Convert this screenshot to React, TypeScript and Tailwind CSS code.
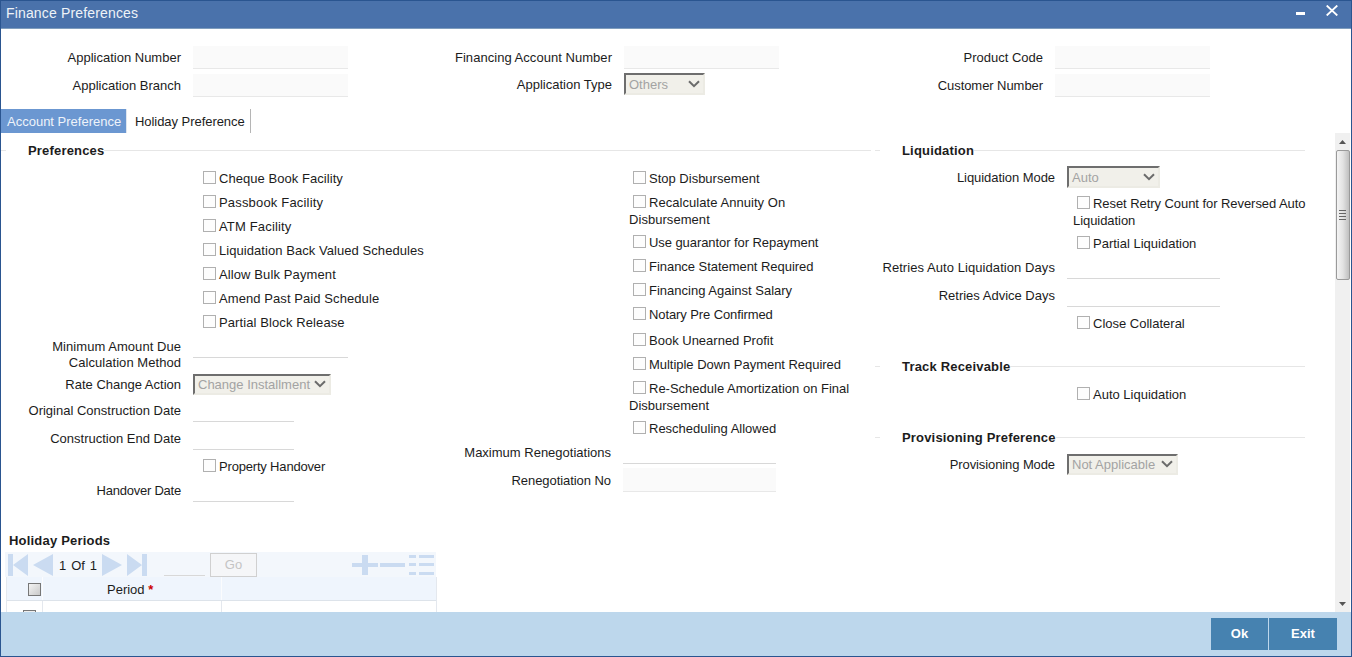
import React from 'react';

const labelCls = 'text-right text-[13px] leading-4 shrink-0 pt-[2px]';
const topLabelCls = 'text-right text-[13px] leading-4 shrink-0';

const CheckBox = () => (
  <span className="inline-block w-[13px] h-[13px] border border-[#b0b0b0] bg-[#fdfdfd] shrink-0 mb-[2px]" />
);

const CheckRow = ({ label, className }: { label: string; className: string }) => (
  <div className={`h-6 flex items-center gap-[3px] text-[13px] ${className}`}>
    <CheckBox />
    <span className="whitespace-nowrap pt-[2px]">{label}</span>
  </div>
);

// checkbox whose label wraps back under the box
const WrapCheck = ({ label, className }: { label: string; className: string }) => (
  <div className={`text-[13px] leading-[17px] ${className}`}>
    <span className="inline-block w-[13px] h-[13px] border border-[#b0b0b0] bg-[#fdfdfd] ml-1 mr-[3px] align-[-1px]" />
    {label}
  </div>
);

const Heading = ({ title, rowClass }: { title: string; rowClass: string }) => (
  <div className={`flex items-center ${rowClass}`}>
    <div className="w-[5px] h-px bg-[#e6e6e6]" />
    <span className="ml-[22px] text-[13px] font-bold whitespace-nowrap tracking-[0.18px] pt-[2px]">{title}</span>
    <div className="flex-1 h-px bg-[#e6e6e6]" />
  </div>
);

const Chevron = () => (
  <svg width="12" height="8" viewBox="0 0 12 8" className="shrink-0">
    <path d="M1 1.2 L6 6.2 L11 1.2" fill="none" stroke="#6b6b6b" strokeWidth="2" />
  </svg>
);

const FakeSelect = ({ value, className }: { value: string; className: string }) => (
  <div
    className={`flex items-center justify-between pl-[3px] pr-[3px] bg-[#f1f0ea] border-2 border-t-[#6e6e6e] border-l-[#6e6e6e] border-r-[#ecebe4] border-b-[#ecebe4] text-[13px] text-[#a3a3a3] ${className}`}
  >
    <span className="whitespace-nowrap pt-[2px]">{value}</span>
    <Chevron />
  </div>
);

const TopRow = ({ label, labelW, fieldW }: { label: string; labelW: string; fieldW: string }) => (
  <div className="h-[23px] flex items-center">
    <span className={`${topLabelCls} ${labelW}`}>{label}</span>
    <div className={`ml-3 h-[23px] bg-[#fafafa] border-b border-[#e8e8e8] ${fieldW}`} />
  </div>
);

const LineRow = ({ label, labelW, fieldW }: { label: string; labelW: string; fieldW: string }) => (
  <div className="h-6 flex items-center">
    <span className={`${labelCls} ${labelW}`}>{label}</span>
    <div className={`ml-3 h-6 border-b border-[#d8d8d8] ${fieldW}`} />
  </div>
);

const Triangle = ({ d }: { d: string }) => (
  <svg width="20" height="22" viewBox="0 0 20 22" className="shrink-0">
    <path d={d} fill="#cadbf1" />
  </svg>
);

const Toolbar = () => (
  <div className="ml-[4px] w-[431px] h-[25px] bg-[#f3f7fc] flex items-center pl-[3px]">
    <Triangle d="M0 0 H5 V22 H0 Z M20 0 V22 L5 11 Z" />
    <span className="w-[5px]" />
    <Triangle d="M20 0 V22 L0 11 Z" />
    <span className="ml-[5px] w-[44px] flex justify-between text-[13px] pl-px pr-[5px] pt-[2px]">
      <span>1</span>
      <span>Of</span>
      <span>1</span>
    </span>
    <Triangle d="M0 0 V22 L20 11 Z" />
    <span className="w-[5px]" />
    <Triangle d="M0 0 V22 L15 11 Z M15 0 H20 V22 H15 Z" />
    <div className="ml-[17px] w-[41px] h-[23px] border-b border-[#d8d8d8]" />
    <div className="ml-[5px] w-[47px] h-[24px] mt-[1px] border border-[#d0d0d0] bg-[#f5f6f8] flex items-center justify-center text-[13px] text-[#c4c4c4]">
      Go
    </div>
    <svg width="83" height="20" viewBox="0 0 83 20" className="ml-[95px] shrink-0">
      <path d="M0 8 H10 V0 H16 V8 H26 V12 H16 V20 H10 V12 H0 Z" fill="#cadbf1" />
      <rect x="28" y="8" width="25" height="4" fill="#cadbf1" />
      <path d="M57 0 H64 V3 H57 Z M67 0 H82 V3 H67 Z M57 8 H64 V11 H57 Z M67 8 H82 V11 H67 Z M57 17 H64 V20 H57 Z M67 17 H82 V20 H67 Z" fill="#cadbf1" />
    </svg>
  </div>
);

const PeriodGrid = () => (
  <div className="ml-[5px] w-[431px] border-x border-[#e4e8ee]">
    <div className="flex h-[24px] bg-[#eff5fd] border-b border-[#dde3ea]">
      <div className="w-[35px] flex items-center justify-end pr-px pt-px">
        <span className="w-[13px] h-[13px] border border-[#777] bg-[linear-gradient(135deg,#f4f4f4,#c9c9c9)]" />
      </div>
      <div className="w-[180px] border-x border-[#fbfcfe] text-[13px] pl-[64px] leading-[25px]">
        Period <span className="text-[#c00] font-bold">*</span>
      </div>
    </div>
    <div className="flex h-[24px]">
      <div className="w-[35px] flex justify-end pr-[6px] pt-[9px]">
        <span className="w-[13px] h-[13px] border border-[#777] bg-[#eee]" />
      </div>
      <div className="w-[180px] border-x border-[#e4e8ee]" />
    </div>
  </div>
);

const Scrollbar = () => (
  <div className="w-[15px] shrink-0 bg-[#f0f0f0] flex flex-col items-center">
    <div className="h-[17px] flex items-center">
      <svg width="7" height="4" viewBox="0 0 7 4"><path d="M3.5 0 L7 4 H0 Z" fill="#555" /></svg>
    </div>
    <div className="w-[14px] h-[130px] rounded-[2px] border border-[#9a9a9a] bg-[linear-gradient(90deg,#f4f4f4,#e2e2e2_50%,#bfbfbf)] flex flex-col items-center justify-center gap-[2px]">
      <span className="w-[7px] h-px bg-[#666]" />
      <span className="w-[7px] h-px bg-[#666]" />
      <span className="w-[7px] h-px bg-[#666]" />
      <span className="w-[7px] h-px bg-[#666]" />
    </div>
    <div className="flex-1" />
    <div className="h-[17px] flex items-center">
      <svg width="7" height="4" viewBox="0 0 7 4"><path d="M0 0 H7 L3.5 4 Z" fill="#555" /></svg>
    </div>
  </div>
);

export default function App() {
  return (
    <div className="w-[1352px] h-[657px] box-border border border-[#2a5590] bg-white flex flex-col overflow-hidden font-['Liberation_Sans',Arial,sans-serif] text-[#1c1c1c]">
      {/* Title bar */}
      <div className="h-[28px] shrink-0 bg-[#4a72ab] border-b border-[#7f9dbd] flex items-center justify-between pl-[5px] pr-[13px]">
        <span className="text-[14px] text-[#eef3f8] tracking-[0.16px] pb-[2px]">Finance Preferences</span>
        <div className="flex items-start gap-[21px] h-[20px]">
          <span className="w-[9px] h-[3px] bg-white mt-[7px]" />
          <svg width="12" height="11" viewBox="0 0 12 11">
            <path d="M0.7 0.5 L11.3 10.5 M11.3 0.5 L0.7 10.5" stroke="#fff" strokeWidth="1.8" fill="none" />
          </svg>
        </div>
      </div>

      {/* Application header fields */}
      <div className="shrink-0 pt-[17px] flex">
        <div className="flex flex-col gap-[5px]">
          <TopRow label="Application Number" labelW="w-[180px]" fieldW="w-[155px]" />
          <TopRow label="Application Branch" labelW="w-[180px]" fieldW="w-[155px]" />
        </div>
        <div className="flex flex-col gap-[5px]">
          <TopRow label="Financing Account Number" labelW="w-[264px] tracking-[0.04px]" fieldW="w-[155px]" />
          <div className="h-[23px] flex items-start">
            <span className={`${topLabelCls} w-[264px] mt-[3px]`}>Application Type</span>
            <FakeSelect value="Others" className="ml-3 mt-[-1px] w-[81px] h-[22px]" />
          </div>
        </div>
        <div className="flex flex-col gap-[5px]">
          <TopRow label="Product Code" labelW="w-[264px]" fieldW="w-[155px]" />
          <TopRow label="Customer Number" labelW="w-[264px] tracking-[-0.06px]" fieldW="w-[155px]" />
        </div>
      </div>

      {/* Tabs */}
      <div className="shrink-0 mt-3 h-6 flex text-[13px]">
        <div className="w-[126px] bg-[#6b97d1] text-[#eef3fa] pl-[6px] pt-px leading-6 border-r border-[#dfe6ef]">Account Preference</div>
        <div className="w-[124px] pl-[8px] pt-px leading-6 border-r border-[#b5b5b5] tracking-[-0.05px]">Holiday Preference</div>
      </div>

      {/* Scrolling body */}
      <div className="h-[479px] shrink-0 flex overflow-hidden">
        <div className="w-[874px] shrink-0 pr-[4px]">
          <Heading title="Preferences" rowClass="h-[33px] pt-[1px]" />
          <div className="flex">
            <div className="w-[437px] shrink-0">
              <CheckRow className="pl-[202px] tracking-[0.05px]" label="Cheque Book Facility" />
              <CheckRow className="pl-[202px] tracking-[0.18px]" label="Passbook Facility" />
              <CheckRow className="pl-[202px] tracking-[0.16px]" label="ATM Facility" />
              <CheckRow className="pl-[202px] tracking-[0.06px]" label="Liquidation Back Valued Schedules" />
              <CheckRow className="pl-[202px] tracking-[0.11px]" label="Allow Bulk Payment" />
              <CheckRow className="pl-[202px] tracking-[0.08px]" label="Amend Past Paid Schedule" />
              <CheckRow className="pl-[202px] tracking-[0.1px]" label="Partial Block Release" />
              <div className="h-9 flex items-start">
                <span className={`${labelCls} w-[180px] mt-[3px] tracking-[0.05px]`}>
                  Minimum Amount Due
                  <br />
                  Calculation Method
                </span>
                <div className="ml-3 w-[155px] h-6 border-b border-[#d8d8d8]" />
              </div>
              <div className="h-7 flex items-center">
                <span className={`${labelCls} w-[180px]`}>Rate Change Action</span>
                <FakeSelect value="Change Installment" className="ml-3 w-[138px] h-[21px]" />
              </div>
              <LineRow label="Original Construction Date" labelW="w-[180px]" fieldW="w-[101px]" />
              <div className="mt-1">
                <LineRow label="Construction End Date" labelW="w-[180px]" fieldW="w-[101px]" />
              </div>
              <div className="mt-1">
                <CheckRow className="pl-[202px] tracking-[-0.18px]" label="Property Handover" />
              </div>
              <LineRow label="Handover Date" labelW="w-[180px] tracking-[-0.23px]" fieldW="w-[101px]" />

              <div className="mt-7 pl-2 h-5 text-[13px] font-bold leading-[22px] tracking-[0.2px]">Holiday Periods</div>
              <div className="mt-[2px]">
                <Toolbar />
                <PeriodGrid />
              </div>
            </div>

            <div className="w-[433px] shrink-0">
              <CheckRow className="pl-[195px]" label="Stop Disbursement" />
              <WrapCheck className="ml-[191px] w-[225px] h-10 pt-1 tracking-[0.05px]" label="Recalculate Annuity On Disbursement" />
              <CheckRow className="pl-[195px] tracking-[-0.07px]" label="Use guarantor for Repayment" />
              <CheckRow className="pl-[195px] tracking-[-0.04px]" label="Finance Statement Required" />
              <CheckRow className="pl-[195px]" label="Financing Against Salary" />
              <CheckRow className="pl-[195px] tracking-[-0.1px]" label="Notary Pre Confirmed" />
              <div className="mt-[2px]">
                <CheckRow className="pl-[195px]" label="Book Unearned Profit" />
              </div>
              <CheckRow className="pl-[195px] tracking-[-0.03px]" label="Multiple Down Payment Required" />
              <WrapCheck className="ml-[191px] w-[225px] h-10 pt-1" label="Re-Schedule Amortization on Final Disbursement" />
              <CheckRow className="pl-[195px]" label="Rescheduling Allowed" />
              <LineRow label="Maximum Renegotiations" labelW="w-[173px]" fieldW="w-[153px]" />
              <div className="mt-1 h-6 flex items-center">
                <span className={`${labelCls} w-[173px] tracking-[-0.06px]`}>Renegotiation No</span>
                <div className="ml-3 w-[153px] h-6 bg-[#fafafa] border-b border-[#e8e8e8]" />
              </div>
            </div>
          </div>
        </div>

        <div className="w-[460px] shrink-0 pr-[30px]">
          <Heading title="Liquidation" rowClass="h-[33px] pt-[1px]" />
          <div className="h-[22px] flex items-center">
            <span className={`${labelCls} w-[180px] tracking-[-0.06px]`}>Liquidation Mode</span>
            <FakeSelect value="Auto" className="ml-3 w-[93px] h-[22px]" />
          </div>
          <WrapCheck className="ml-[198px] w-[235px] h-[43px] pt-[7px] tracking-[-0.06px]" label="Reset Retry Count for Reversed Auto Liquidation" />
          <CheckRow className="pl-[202px]" label="Partial Liquidation" />
          <LineRow label="Retries Auto Liquidation Days" labelW="w-[180px] tracking-[0.07px]" fieldW="w-[153px]" />
          <div className="mt-1">
            <LineRow label="Retries Advice Days" labelW="w-[180px]" fieldW="w-[153px]" />
          </div>
          <div className="mt-1">
            <CheckRow className="pl-[202px]" label="Close Collateral" />
          </div>
          <div className="mt-[15px]">
            <Heading title="Track Receivable" rowClass="h-8" />
          </div>
          <CheckRow className="pl-[202px]" label="Auto Liquidation" />
          <div className="mt-[14px]">
            <Heading title="Provisioning Preference" rowClass="h-[34px]" />
          </div>
          <div className="h-5 flex items-center">
            <span className={`${labelCls} w-[180px] tracking-[-0.1px]`}>Provisioning Mode</span>
            <FakeSelect value="Not Applicable" className="ml-3 w-[111px] h-[21px]" />
          </div>
        </div>

        <Scrollbar />
      </div>

      {/* Footer */}
      <div className="flex-1 bg-[#bdd7ec] flex justify-end items-start pt-[6px] pr-[14px] gap-px">
        <button className="w-[57px] h-[32px] bg-[#4682b0] text-white text-[13px] font-bold">Ok</button>
        <button className="w-[68px] h-[32px] bg-[#4682b0] text-white text-[13px] font-bold">Exit</button>
      </div>
    </div>
  );
}
